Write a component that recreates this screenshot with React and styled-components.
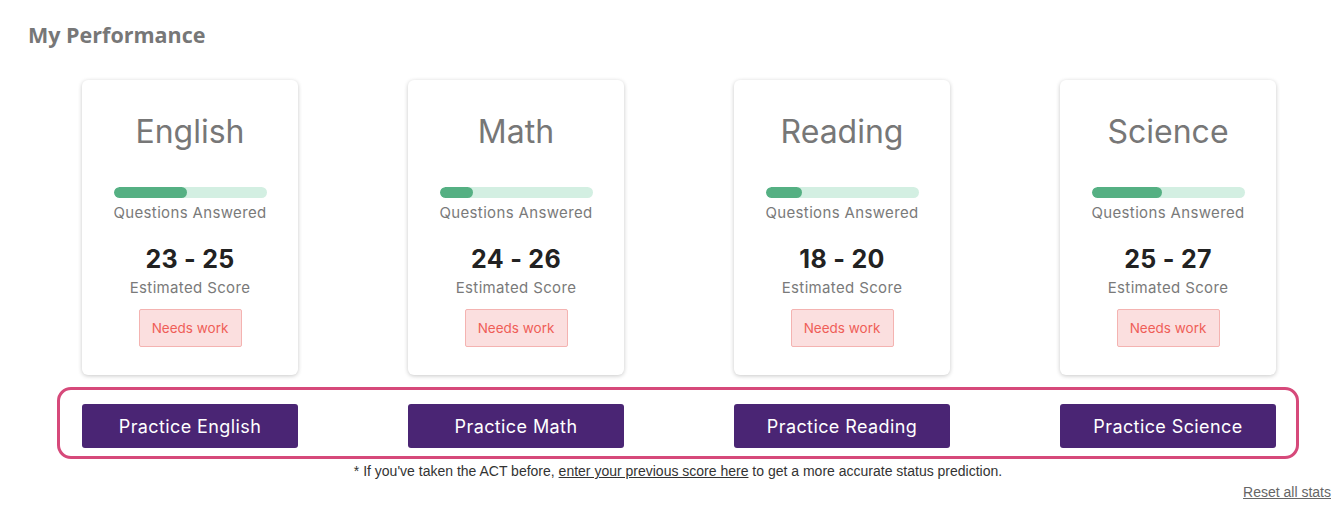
import React from 'react';
import styled, { createGlobalStyle } from 'styled-components';

const GlobalStyle = createGlobalStyle`
  body {
    margin: 0;
    background: #fff;
    font-family: "Inter", "Open Sans", sans-serif;
  }
`

const Page = styled.div`
  width: 1340px;
  padding: 22px 9px 0 28px;
  box-sizing: border-box;
`

const Heading = styled.h2`
  margin: 0;
  font-family: "Open Sans", sans-serif;
  font-size: 21.5px;
  line-height: 26px;
  font-weight: 700;
  color: #777;
`

const Section = styled.div`
  margin: 32px 32px 0 29px;
  display: flex;
  flex-direction: column;
  align-items: center;
`

const CardRow = styled.div`
  width: 100%;
  padding: 0 23px 0 25px;
  box-sizing: border-box;
  display: flex;
  justify-content: space-between;
`

const Card = styled.div`
  width: 216px;
  padding: 32px 0 28px;
  box-sizing: border-box;
  background: #fff;
  border-radius: 6px;
  box-shadow: 0 1px 4px rgba(0, 0, 0, 0.22);
  display: flex;
  flex-direction: column;
  align-items: center;
`

const Subject = styled.div`
  font-size: 32px;
  line-height: 40px;
  font-weight: 400;
  color: #777;
`

const Track = styled.div`
  margin-top: 35px;
  width: 153px;
  height: 11px;
  border-radius: 6px;
  background: #d3efe2;
  overflow: hidden;
`

const Fill = styled.div`
  height: 100%;
  border-radius: 6px;
  background: #55b083;
`

const Caption = styled.div`
  margin-top: ${p => p.$gap}px;
  font-size: 15px;
  line-height: 20px;
  letter-spacing: 0.35px;
  color: #7a7a7a;
`

const Score = styled.div`
  margin-top: 21px;
  font-size: 25px;
  line-height: 30px;
  font-weight: 700;
  color: #222;
  letter-spacing: 0.3px;
`

const Badge = styled.div`
  margin-top: 11px;
  width: 103px;
  height: 38px;
  box-sizing: border-box;
  display: flex;
  align-items: center;
  justify-content: center;
  background: #fbdfdf;
  border: 1px solid #f4b3b1;
  border-radius: 2px;
  color: #ef5e58;
  font-size: 13.5px;
`

const Highlight = styled.div`
  margin-top: 12px;
  width: 100%;
  box-sizing: border-box;
  border: 3px solid #d6497a;
  border-radius: 14px;
  padding: 14px 20px 8px 22px;
  display: flex;
  justify-content: space-between;
`

const PracticeButton = styled.button`
  width: 216px;
  height: 44px;
  border: none;
  border-radius: 3px;
  background: #4a2574;
  color: #fff;
  font-family: "Inter", "Open Sans", sans-serif;
  font-size: 18px;
  letter-spacing: 0.4px;
  cursor: pointer;
`

const Note = styled.p`
  margin: 4px 0 0;
  font-family: "Liberation Sans", sans-serif;
  font-size: 14px;
  line-height: 16px;
  color: #333;

  a {
    color: #333;
    text-decoration: underline;
  }
`

const Footer = styled.div`
  margin-top: 5px;
  display: flex;
  justify-content: flex-end;
`

const ResetLink = styled.a`
  font-family: "Liberation Sans", sans-serif;
  font-size: 14px;
  line-height: 16px;
  color: #666;
  text-decoration: underline;
`

const subjects = [
  { name: 'English', answered: 48, score: '23 - 25' },
  { name: 'Math', answered: 22, score: '24 - 26' },
  { name: 'Reading', answered: 24, score: '18 - 20' },
  { name: 'Science', answered: 46, score: '25 - 27' },
]

export default function App() {
  return (
    <Page>
      <GlobalStyle />
      <Heading>My Performance</Heading>
      <Section>
        <CardRow>
          {subjects.map(s => (
            <Card key={s.name}>
              <Subject>{s.name}</Subject>
              <Track>
                <Fill style={{ width: `${s.answered}%` }} />
              </Track>
              <Caption $gap={5}>Questions Answered</Caption>
              <Score>{s.score}</Score>
              <Caption $gap={4}>Estimated Score</Caption>
              <Badge>Needs work</Badge>
            </Card>
          ))}
        </CardRow>
        <Highlight>
          {subjects.map(s => (
            <PracticeButton key={s.name}>Practice {s.name}</PracticeButton>
          ))}
        </Highlight>
        <Note>
          * If you've taken the ACT before, <a href="#">enter your previous score here</a> to get a more accurate status prediction.
        </Note>
      </Section>
      <Footer>
        <ResetLink href="#">Reset all stats</ResetLink>
      </Footer>
    </Page>
  )
}
